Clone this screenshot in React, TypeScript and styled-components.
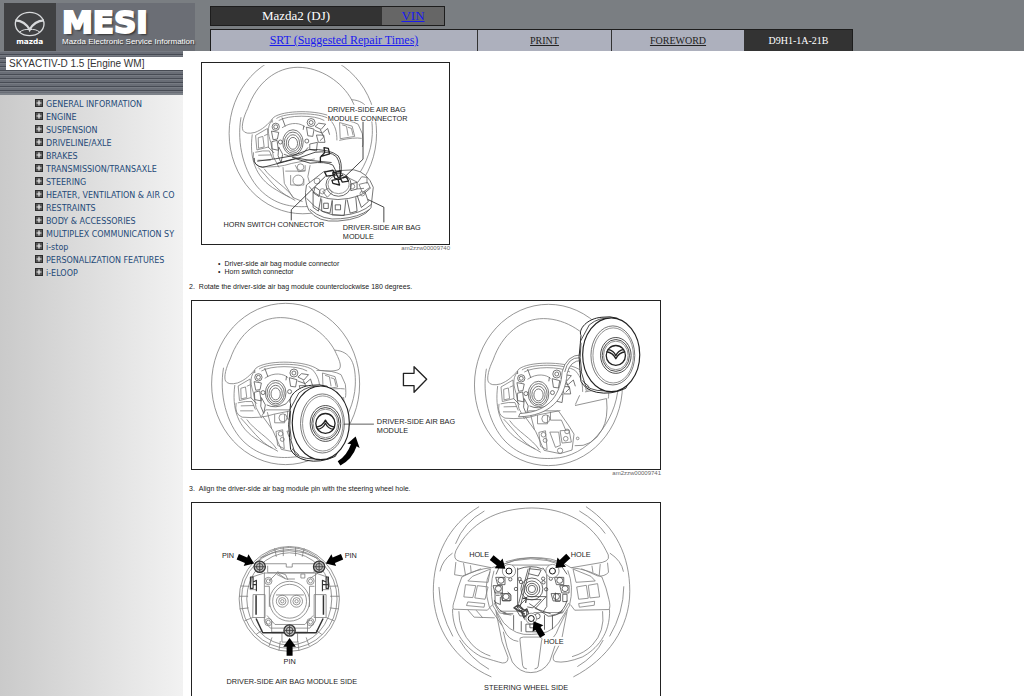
import React from "react";
import styled, { createGlobalStyle } from "styled-components";

const GlobalStyle = createGlobalStyle`
  * { box-sizing: border-box; }
  body { margin: 0; background: #fff; font-family: "Liberation Sans", Arial, sans-serif; }
`;

const Page = styled.div`
  display: flex;
  flex-direction: column;
  height: 100vh;
  overflow: hidden;
`;

const Header = styled.header`
  display: flex;
  flex: none;
  gap: 15px;
  background: #7a7e82;
`;

const Brand = styled.div`
  display: flex;
  flex: none;
  width: 195px;
  height: 51px;
  padding: 3px 0 0 4px;
`;

const Badge = styled.div`
  display: flex;
  flex: none;
  width: 52px;
  background: #404143;
`;

const BrandText = styled.div`
  flex: 1;
  min-width: 0;
  padding: 5px 0 0 6px;
  background: #6b6e75;
  color: #fff;
`;

const BrandName = styled.div`
  font: bold 31px/29px "DejaVu Sans", sans-serif;
  -webkit-text-stroke: 2px #fff;
  text-shadow: 2px 2px 2px #333;
`;

const BrandLine = styled.div`
  font-size: 8px;
  line-height: 10px;
  white-space: nowrap;
  text-shadow: 1px 1px 1px #333;
`;

const Tabs = styled.div`
  display: flex;
  flex-direction: column;
  align-items: flex-start;
  gap: 3px;
  padding-top: 6px;
`;

const TabRow = styled.nav`
  display: flex;
  border: 1px solid #1d1d1d;
  &:last-child { border-bottom: 0; }
`;

const Tab = styled.div<{ $w: number; $h: number; $tone: "dark" | "mid" | "light"; $size: number }>`
  display: flex;
  align-items: center;
  justify-content: center;
  width: ${(p) => p.$w}px;
  height: ${(p) => p.$h}px;
  border-right: 1px solid #333;
  background: ${(p) => ({ dark: "#333", mid: "#666", light: "#adb0bd" })[p.$tone]};
  color: ${(p) => (p.$tone === "dark" ? "#fff" : "#222")};
  font: ${(p) => p.$size}px "Liberation Serif", "Times New Roman", serif;
  white-space: nowrap;
  &:last-child { border-right: 0; }
`;

const TabLink = styled.a<{ $blue?: boolean }>`
  color: ${(p) => (p.$blue ? "#1a1aee" : "#222")};
`;

const Main = styled.div`
  display: flex;
  flex: 1;
  min-height: 0;
`;

const Sidebar = styled.aside`
  flex: none;
  width: 183px;
  overflow: hidden;
  background: linear-gradient(90deg, #cacaca, #f2f2f2);
`;

const Band = styled.div`
  height: 44px;
  padding: 6px 0 0 6px;
  border-bottom: 2px solid #7d8289;
  background: repeating-linear-gradient(#777b83 0 1px, #696d76 1px 3px, #474b54 3px 4px);
`;

const EngineSelect = styled.select`
  display: block;
  width: 100%;
  height: 13px;
  padding: 0 3px;
  border: 0;
  border-radius: 0;
  appearance: none;
  background: #fff;
  color: #333;
  font: 10px/13px "Liberation Sans", Arial, sans-serif;
`;

const Menu = styled.ul`
  margin: 0;
  padding: 3px 0 0 35px;
  list-style: none;
`;

const MenuItem = styled.li`
  height: 13px;
`;

const MenuLink = styled.a`
  display: flex;
  align-items: center;
  gap: 3px;
  color: #1f4a78;
  font: 8px/13px "DejaVu Sans", Verdana, sans-serif;
  text-decoration: none;
  white-space: nowrap;
`;

const MenuIcon = styled.svg`
  flex: none;
  width: 8px;
  height: 8px;
  margin-bottom: 3px;
`;

const Content = styled.main`
  flex: 1;
  min-width: 0;
  overflow: hidden;
  padding: 11px 6px 0;
  color: #222;
  font-size: 7px;
  line-height: 8px;
`;

const Figure = styled.figure<{ $w: number; $indent: number }>`
  width: ${(p) => p.$w}px;
  margin: 0 0 8px ${(p) => p.$indent}px;
`;

const Plate = styled.svg`
  display: block;
  width: 100%;
  border: 1px solid #222;
  fill: none;
  stroke: #7c7c7c;
  stroke-width: 2.4;
  stroke-linejoin: round;
  text {
    fill: #1c1c1c;
    stroke: none;
    font: 22px "Liberation Sans", Arial, sans-serif;
  }
`;

const Caption = styled.figcaption`
  color: #666;
  font-size: 6px;
  line-height: 7px;
  text-align: right;
`;

const Parts = styled.ul`
  margin: 8px 0 7px;
  padding: 0 0 0 29px;
  list-style: none;
`;

const Part = styled.li`
  display: flex;
  gap: 4px;
`;

const Step = styled.p`
  display: flex;
  gap: 4px;
  margin: 0 0 9px;
`;

const menu = [
  "GENERAL INFORMATION", "ENGINE", "SUSPENSION", "DRIVELINE/AXLE", "BRAKES",
  "TRANSMISSION/TRANSAXLE", "STEERING", "HEATER, VENTILATION & AIR CO",
  "RESTRAINTS", "BODY & ACCESSORIES", "MULTIPLEX COMMUNICATION SY", "i-stop",
  "PERSONALIZATION FEATURES", "i-ELOOP",
];

const PlusIcon = () => (
  <MenuIcon viewBox="0 0 8 8" aria-hidden="true">
    <rect width="8" height="8" fill="#2c2c2c" />
    <rect x="1" y="1" width="6" height="6" fill="#555" />
    <path d="M4 1.5v5M1.5 4h5" stroke="#eee" strokeWidth="1.2" />
  </MenuIcon>
);

const MazdaLogo = () => (
  <svg width="52" height="48" viewBox="0 0 156 144" fill="none" aria-label="mazda">
    <g stroke="#d8dadc" strokeWidth="4">
      <ellipse cx="77" cy="63" rx="43" ry="35" />
      <path d="M34 52C52 53 67 61 77 80C87 61 102 53 120 52" strokeWidth="7" />
      <path d="M77 80C66 78 55 80 46 88M77 80C88 78 99 80 108 88" strokeWidth="3" />
    </g>
    <text x="77" y="124" textAnchor="middle" fill="#fff" fontSize="22" fontWeight="bold" fontFamily="DejaVu Sans, sans-serif">mazda</text>
  </svg>
);

/* Bare steering wheel with its switches and hub, shared by the removal views */
const WheelArt = ({ lower = true }: { lower?: boolean }) => (
  <g>
    <ellipse cx="285" cy="259" rx="223" ry="243" />
    <path d="M104 250C98 238 106 208 118 184C145 105 205 59 270 59C340 59 405 105 433 158C445 183 456 204 446 215Q436 221 405 220Q386 221 374 210C330 187 225 188 196 211C180 232 162 248 140 256Q112 263 104 250Z" />
    <path d="M98 210C84 290 107 378 154 428C200 475 250 483 300 480C400 477 490 370 495 262C497 200 483 160 432 157" />
    <path d="M132 262C123 330 138 392 205 430C228 445 245 451 262 462M150 362C178 390 208 435 245 452M168 366C190 398 235 420 258 455" />
    <path d="M378 218Q430 218 452 231L465 260Q468 290 465 300M395 280Q440 270 463 274M190 222C176 240 180 262 188 286L196 330L213 362" />
    <path d="M205 214C230 195 335 194 366 216C384 236 388 254 388 280M212 220C240 203 320 202 350 220M222 242C250 222 280 228 292 240" />
    <path d="M142 265L178 244L181 300L146 309ZM150 272L164 268L168 300L151 304ZM168 266L179 261M396 226L434 237L442 268L398 275ZM404 233L417 237L422 266M421 240L432 244L437 265" />
    <path d="M136 316Q130 350 154 359Q210 364 250 350L321 336M141 316Q165 310 184 312L194 336M150 325L190 324M148 340H188" />
    <g stroke="#555">
      <ellipse cx="255" cy="286" rx="31" ry="38" />
      <ellipse cx="255" cy="287" rx="26" ry="32" />
      <ellipse cx="255" cy="288" rx="20" ry="25" />
      <ellipse cx="255" cy="289" rx="14" ry="18" />
      <circle cx="203" cy="239" r="11" /><circle cx="203" cy="239" r="6" />
      <circle cx="310" cy="226" r="12" /><circle cx="310" cy="226" r="6" />
      <circle cx="217" cy="285" r="6" /><circle cx="297" cy="282" r="6" />
      <path d="M190 252L212 256L208 276L195 278ZM191 284L207 280L211 310L192 306ZM212 300L224 322L219 348L210 326ZM296 240L319 246L315 268L300 266ZM322 238L340 247L354 231L333 228ZM321 250L344 258L360 244L366 263M306 291L329 286L326 312L306 307ZM338 248L348 270L337 281M228 322Q254 335 286 319L301 301M326 264H348L352 286H332Z" />
      <path d="M192 226V217M222 211L232 238M288 235L286 248M180 300L198 318" />
    </g>
    {lower && (
      <g stroke="#777">
        <path d="M214 354L225 337H315L345 380L362 407L356 455L320 466L272 456L246 398ZM230 344L243 394M252 350V376H282V350M291 340V365H324L337 395" />
        <path d="M256 402L276 397L281 454L261 444ZM289 401H316L321 441L306 447ZM320 397L347 395L354 431L326 434Z" />
        <circle cx="277" cy="361" r="12" /><circle cx="270" cy="409" r="7" /><circle cx="275" cy="426" r="6" />
        <circle cx="341" cy="399" r="7" /><circle cx="337" cy="421" r="7" /><circle cx="320" cy="457" r="8" /><circle cx="373" cy="420" r="4" />
        <path d="M365 321L460 300Q466 360 447 393Q418 447 364 442M366 318L379 290" />
      </g>
    )}
  </g>
);

/* Air bag module cover seen from the front */
const Cover = ({ flip = false }: { flip?: boolean }) => (
  <g stroke="#222" fill="#fff">
    <path d="M300 318C291 300 318 266 363 263Q388 259 410 266L440 300L470 400L435 477Q390 498 347 489Q312 481 300 456L297 421Q291 382 298 342Z" strokeWidth="3" />
    <path d="M298 336L325 286Q355 261 392 267M300 425L314 470Q344 490 392 483M300 340Q294 386 302 426M304 454L325 473" />
    <ellipse cx="391" cy="376" rx="86" ry="111" strokeWidth="3.5" />
    <ellipse cx="396" cy="378" rx="66" ry="89" stroke="#555" />
    <ellipse cx="397" cy="378" rx="61" ry="83" stroke="#777" />
    <ellipse cx="405" cy="378" rx="46" ry="54" />
    <ellipse cx="405" cy="378" rx="41" ry="48" />
    <ellipse cx="405" cy="378" rx="37" ry="43" stroke="#777" />
    <g transform={flip ? "rotate(180 405 378)" : undefined} strokeWidth="4">
      <ellipse cx="405" cy="378" rx="29" ry="30" />
      <path d="M377 367Q396 369 405 388Q414 369 433 367M380 360Q399 363 405 379Q411 363 430 360" fill="none" />
    </g>
  </g>
);

const Arrow = ({ x, y, turn }: { x: number; y: number; turn: number }) => (
  <path transform={`translate(${x} ${y}) rotate(${turn})`} d="M0 0L-26 -19V-9H-53V9H-26V19Z" fill="#000" stroke="none" />
);

const ConnectorFigure = () => (
  <Plate viewBox="18 21 747 546" role="img" aria-label="Air bag module connectors">
    <svg x="20" y="28" width="740" height="536" viewBox="20 28 740 536">
      <g transform="translate(38 -25)"><WheelArt lower={false} /></g>
    </svg>
    <path d="M263 336L267 385L293 428L322 440M270 348H330V330M286 360V390H326V371M300 330L310 350L329 346M345 330L338 365L350 405L332 432L358 482" />
    <circle cx="316" cy="336" r="10" /><circle cx="309" cy="376" r="16" />
    <path d="M334 390Q325 437 341 466Q369 504 429 499Q506 494 529 459L536 397Q520 352 477 344L387 349Z" fill="#fff" stroke="#555" />
    <path d="M342 394Q364 433 429 434Q500 431 529 398M334 430Q382 486 441 482Q500 477 531 448M344 463Q384 499 437 492Q491 488 525 464" stroke="#555" />
    <ellipse cx="431" cy="389" rx="38" ry="35" stroke="#444" /><ellipse cx="431" cy="388" rx="32" ry="28" />
    <path d="M354 410V458L370 469L378 427M380 433V469L405 475L412 435M386 445H400V461H386ZM412 438V480L448 482L453 434M421 450H437V465H421ZM457 434L466 475L487 469L483 427M487 421L500 458L521 440L510 408M360 396L374 406L372 425L355 414ZM468 387V407L487 402V382Z" stroke="#444" />
    <path d="M493 388L519 382L526 397L503 413ZM454 365L489 382L501 365L517 367V386M383 410L399 400L412 412L397 427ZM487 402L508 400" stroke="#666" />
    <circle cx="366" cy="378" r="9" /><circle cx="503" cy="416" r="7" /><circle cx="473" cy="394" r="7" /><circle cx="382" cy="409" r="8" />
    <g stroke="#222">
      <path d="M176 308Q172 330 201 337Q252 324 308 309L360 291Q403 285 425 305Q440 330 432 356M185 318Q245 311 290 302L342 283Q404 280 430 302Q443 323 438 354M246 324L300 310L345 324Q392 318 414 330L427 356M290 306L348 316L410 322" />
      <path d="M413 353L438 347L435 373L420 370ZM421 350L430 368L445 359M411 376L429 372L434 390L414 385ZM437 370L455 365L461 378L442 381ZM389 351L414 345L420 360L395 363ZM376 304L404 296L400 279L387 277L389 292L376 306V322" strokeWidth="4" />
      <path d="M505 198V312L446 369M288 497V465L392 363M568 503V457L520 434" strokeWidth="2.5" />
    </g>
    <path d="M397 147H643V198H397Z" fill="#fff" stroke="none" />
    <text x="398" y="168">DRIVER-SIDE AIR BAG</text>
    <text x="398" y="195">MODULE CONNECTOR</text>
    <text x="83" y="517">HORN SWITCH CONNECTOR</text>
    <text x="444" y="526">DRIVER-SIDE AIR BAG</text>
    <text x="444" y="552">MODULE</text>
  </Plate>
);

const RotateFigure = () => (
  <Plate viewBox="3 9 1410 507" role="img" aria-label="Rotating the air bag module">
    <WheelArt />
    <Cover flip />
    <path d="M640 227H672V207L710 245L672 284V264H640Z" stroke="#222" strokeWidth="4" />
    <path d="M460 380H551" stroke="#333" />
    <path d="M442 492Q470 475 482 440L471 439L496 417L508 452L499 447Q486 486 450 505Z" fill="#000" stroke="none" />
    <text x="560" y="380">DRIVER-SIDE AIR BAG</text>
    <text x="560" y="407">MODULE</text>
    <g transform="translate(792 3)">
      <WheelArt />
      <path d="M385 168Q339 168 326 220C322 280 295 340 199 345L195 355C287 353 336 302 341 225Q350 185 385 185Z" fill="#fff" stroke="#666" />
      <path d="M379 177Q344 175 334 220" stroke="#666" />
    </g>
    <g transform="translate(875 -205)"><Cover /></g>
  </Plate>
);

const ModuleBack = () => (
  <g>
    <ellipse cx="311" cy="358" rx="151" ry="158" />
    <ellipse cx="311" cy="358" rx="144" ry="149" />
    <ellipse cx="311" cy="358" rx="128" ry="139" />
    <path d="M205 254Q250 203 311 203Q372 203 418 254M224 234Q310 190 398 236M267 205L272 231M293 202V229M330 202V229M356 205L350 231M164 319L191 320M160 350H187M162 388L189 385M176 424L201 414M458 319L431 320M462 350H434M459 388L433 385M446 424L422 414M250 500L259 474M280 514L284 485M340 514L337 485M371 500L362 474M211 465L230 452M409 465L391 452" />
    <path d="M235 252H302V262H320V252H386V279H246V258M238 279L199 292L193 330H211M388 279L425 292L430 330H412M202 345H238V414H201ZM386 345H422V414H386ZM236 280V424L254 446H373L390 424V280ZM250 304L275 279L301 298L328 298M374 296L398 280M244 408L268 435H358L383 408M258 426V458H366V426M289 462V488H336V462M346 283H358V295H346Z" />
    <path d="M275 276L300 285L307 301M273 284L299 297M237 320H251V382M387 320H372V382M258 460H294M329 460H365" />
    <circle cx="312" cy="365" r="60" /><circle cx="312" cy="365" r="51" />
    <path d="M271 346H355" />
    <circle cx="290" cy="365" r="18" /><circle cx="333" cy="365" r="18" /><circle cx="290" cy="365" r="11" /><circle cx="333" cy="365" r="11" />
    <circle cx="290" cy="365" r="5" /><circle cx="333" cy="365" r="5" />
    {[[248, 304], [375, 304], [248, 428], [375, 428]].map(([x, y]) => (
      <g key={`${x}-${y}`}><circle cx={x} cy={y} r="11" /><circle cx={x} cy={y} r="6" /></g>
    ))}
    <g stroke="#333">
      <path d="M211 347V406M414 347V406M211 417L231 460H392L413 417" strokeWidth="4.5" />
      <path d="M194 292H202V326H194ZM202 307L212 302V335M422 292H429V326H422ZM422 307L411 302V335M200 315H212M412 315H427" strokeWidth="3.5" />
      {[[222, 261], [401, 261], [312, 453]].map(([x, y]) => (
        <g key={x}>
          <circle cx={x} cy={y} r="17" fill="#bbb" strokeWidth="4" />
          <circle cx={x} cy={y} r="10" />
          <path d={`M${x - 15} ${y}H${x + 15}M${x} ${y - 15}V${y + 15}`} />
        </g>
      ))}
    </g>
  </g>
);

const WheelFront = () => (
  <g>
    <path d="M178 20C85 75 40 170 40 275C40 385 105 485 215 533M500 20C590 80 632 170 632 275C632 385 565 480 462 533" />
    <path d="M120 185Q97 180 108 153C150 70 230 25 337 24C440 25 520 70 561 153Q580 181 549 188L455 204Q430 185 394 178Q334 167 280 183Q238 199 215 204Z" />
    <path d="M194 33Q132 67 107 132M480 33Q534 65 558 101M98 160Q68 180 60 215M57 262Q60 340 99 411M119 422Q151 477 208 510M572 160Q607 183 613 216M614 260Q613 340 571 411M552 422Q528 470 474 502" />
    <path d="M108 187L104 225L128 229L184 207M131 190L137 226M152 197L154 217M565 189L568 218Q556 231 536 229L486 207M543 193L540 226M518 198L521 218" />
    <path d="M214 204Q171 208 126 232Q113 265 105 299Q96 323 101 329L203 332L219 315M456 204Q502 208 548 232Q562 265 569 299Q575 323 569 330L466 332L453 315" />
    <path d="M98 328C97 405 144 450 184 472Q228 486 248 491Q266 492 265 474L247 426L228 332M571 329C574 405 531 450 489 473Q437 493 409 487Q399 485 402 470L426 424L444 330" />
    <path d="M117 335Q116 393 157 436Q181 460 212 470M550 335Q558 396 519 437Q496 461 458 472M144 331L163 353L225 355M169 332L189 355" />
    <path d="M158 230L212 208L205 248L144 244ZM137 255L168 258L159 294L132 292ZM173 258L205 262L196 299L165 295ZM144 307L195 312L193 323L140 318ZM461 208L515 230L528 244L470 248ZM472 262L501 257L507 296L478 299ZM507 257L535 252L541 292L512 295ZM478 312L526 305L525 317L480 323Z" />
    <path d="M211 216Q189 257 209 323L247 378M223 213Q208 260 220 319L252 370Q288 410 335 405Q390 406 417 371L450 319Q465 260 445 212M239 198Q330 156 434 198M258 186Q334 161 411 187M277 196H390M223 310L239 340L275 347M448 310L430 340L395 347M239 335H325M342 339H430M230 338L253 390Q266 423 296 426M441 338L417 386Q406 421 379 426" />
    <path d="M301 421Q298 414 311 413H360Q371 414 366 425L356 501Q355 508 345 509M301 421L309 498Q310 508 322 509M251 397Q260 445 278 488Q301 521 334 520Q371 520 391 486L408 435" />
    <g stroke="#444">
      <circle cx="337" cy="268" r="33" /><circle cx="337" cy="268" r="24" /><circle cx="337" cy="268" r="17" /><circle cx="337" cy="268" r="11" />
      <path d="M294 204V325L320 353M370 204L382 222V321L370 338M294 209Q334 193 370 208M332 202L302 321M326 207L297 312M329 207L365 211L356 229L327 222" />
      {[[244, 242], [236, 267], [259, 291], [421, 242], [437, 267], [411, 291]].map(([x, y]) => (
        <g key={`${x}-${y}`}><circle cx={x} cy={y} r="9" /><path d={`M${x - 16} ${y - 9}H${x + 12}V${y + 13}H${x - 10}Z`} /></g>
      ))}
      {[[272, 239], [300, 238], [304, 247], [371, 237], [372, 248], [394, 237], [289, 268], [380, 269]].map(([x, y]) => (
        <circle key={`${x}-${y}`} cx={x} cy={y} r="5" />
      ))}
      <path d="M226 275V308L242 315V292M229 287H240M248 279V303H274V286L264 277M408 279V305H422M430 284H443V306H430ZM240 199L229 224M427 200L443 224M224 302Q234 337 260 341M443 303Q434 333 415 341" />
      <path d="M323 291H380L347 327L394 343M321 300H365L340 325L323 322M329 312L386 350Q410 351 431 333M322 295L289 329L301 349L323 350M289 319L321 334V348M301 325L327 337M309 346L316 361M282 347V391M305 365V397M375 347V391M399 347V389M319 374H354V397H319ZM331 374V385H346M251 343H281" />
      <path d="M283 325L297 316L310 328L303 337ZM306 339L322 328L327 343L313 354ZM297 331L316 344M309 297L321 294L318 310" strokeWidth="4" />
      <circle cx="354" cy="350" r="8" />
    </g>
    <g fill="#fff">
      <circle cx="268" cy="214" r="20" /><circle cx="399" cy="214" r="20" /><circle cx="335" cy="357" r="16" stroke="#777" />
    </g>
    <g stroke="#111" fill="#fff" strokeWidth="3">
      <circle cx="268" cy="214" r="9" /><circle cx="399" cy="214" r="9" /><circle cx="335" cy="357" r="9" />
    </g>
  </g>
);

const AlignFigure = () => (
  <Plate viewBox="18 69 1410 630" role="img" aria-label="Aligning pins and holes">
    <ModuleBack />
    <Arrow x={205} y={251} turn={22} />
    <Arrow x={421} y={251} turn={158} />
    <Arrow x={312} y={476} turn={-90} />
    <text x="108" y="236">PIN</text>
    <text x="478" y="236">PIN</text>
    <text x="294" y="553">PIN</text>
    <text x="122" y="615">DRIVER-SIDE AIR BAG MODULE SIDE</text>
    <g transform="translate(705 60)">
      <WheelFront />
      <Arrow x={257} y={207} turn={39} />
      <Arrow x={408} y={205} turn={137} />
      <Arrow x={342} y={365} turn={-121} />
      <path d="M372 413H437V439H372Z" fill="#fff" stroke="none" />
      <text x="148" y="173">HOLE</text>
      <text x="454" y="173">HOLE</text>
      <text x="373" y="434">HOLE</text>
      <text x="193" y="572">STEERING WHEEL SIDE</text>
    </g>
  </Plate>
);

export default function App() {
  return (
    <Page>
      <GlobalStyle />
      <Header>
        <Brand>
          <Badge><MazdaLogo /></Badge>
          <BrandText>
            <BrandName>MESI</BrandName>
            <BrandLine>Mazda Electronic Service Information</BrandLine>
          </BrandText>
        </Brand>
        <Tabs>
          <TabRow>
            <Tab $w={171} $h={18} $tone="dark" $size={13}>Mazda2 (DJ)</Tab>
            <Tab $w={62} $h={18} $tone="mid" $size={13}><TabLink $blue href="#vin">VIN</TabLink></Tab>
          </TabRow>
          <TabRow>
            <Tab $w={267} $h={21} $tone="light" $size={12}><TabLink $blue href="#srt">SRT (Suggested Repair Times)</TabLink></Tab>
            <Tab $w={134} $h={21} $tone="light" $size={10}><TabLink href="#print">PRINT</TabLink></Tab>
            <Tab $w={133} $h={21} $tone="light" $size={10}><TabLink href="#foreword">FOREWORD</TabLink></Tab>
            <Tab $w={107} $h={21} $tone="dark" $size={10}>D9H1-1A-21B</Tab>
          </TabRow>
        </Tabs>
      </Header>
      <Main>
        <Sidebar>
          <Band>
            <EngineSelect aria-label="Engine"><option>SKYACTIV-D 1.5 [Engine WM]</option></EngineSelect>
          </Band>
          <Menu>
            {menu.map((name) => (
              <MenuItem key={name}><MenuLink href="#section"><PlusIcon />{name}</MenuLink></MenuItem>
            ))}
          </Menu>
        </Sidebar>
        <Content>
          <Figure $w={249} $indent={12}><ConnectorFigure /><Caption>am2zzw00009740</Caption></Figure>
          <Parts>
            <Part><span>•</span>Driver-side air bag module connector</Part>
            <Part><span>•</span>Horn switch connector</Part>
          </Parts>
          <Step><span>2.</span>Rotate the driver-side air bag module counterclockwise 180 degrees.</Step>
          <Figure $w={470} $indent={2}><RotateFigure /><Caption>am2zzw00009741</Caption></Figure>
          <Step><span>3.</span>Align the driver-side air bag module pin with the steering wheel hole.</Step>
          <Figure $w={470} $indent={2}><AlignFigure /></Figure>
        </Content>
      </Main>
    </Page>
  );
}
